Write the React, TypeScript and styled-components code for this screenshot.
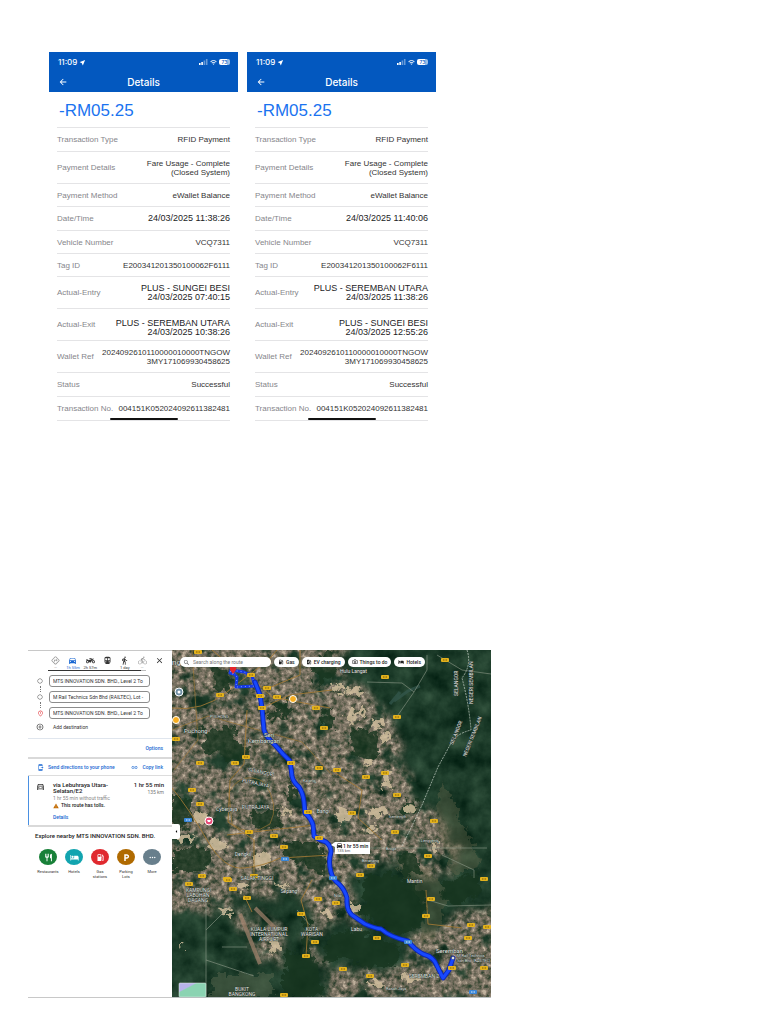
import React from "react";
import styled, { createGlobalStyle, css } from "styled-components";
import {
  MdOutlineDirections, MdDirectionsCar, MdTwoWheeler, MdDirectionsTransit, MdDirectionsWalk,
  MdDirectionsBike, MdClose, MdOutlinePlace, MdAddCircleOutline, MdSendToMobile, MdLink,
  MdOutlineDirectionsCar, MdWarning, MdRestaurant, MdHotel, MdLocalGasStation, MdLocalParking,
  MdMoreHoriz, MdSearch, MdEvStation, MdOutlineLocalSee, MdArrowBack, MdWifi, MdNearMe, MdArrowLeft,
  MdRadioButtonUnchecked,
} from "react-icons/md";

const GlobalStyle = createGlobalStyle`
  * { box-sizing: border-box; }
  body { margin: 0; background: #fff; }
  button, input { font: inherit; color: inherit; }
  button { border: 0; padding: 0; background: none; cursor: pointer; }
  a { color: inherit; text-decoration: none; }
`;

const Page = styled.main`
  padding: 52px 0 26px;
  font-family: "Liberation Sans", Arial, sans-serif;
`;

const Receipts = styled.section`
  display: grid;
  grid-template-columns: 49fr 189fr 9fr 189fr 332fr;
  margin-bottom: 230px;
`;

const Receipt = styled.article<{ $column: number }>`
  grid-column: ${(p) => p.$column};
  grid-row: 1;
  min-width: 0;
`;

const ReceiptHeader = styled.header`
  background: #0358bf;
  color: #fff;
  font-family: Inter, "Liberation Sans", sans-serif;
`;

const StatusBar = styled.div`
  display: flex;
  align-items: center;
  justify-content: space-between;
  height: 20px;
  padding: 0 8px 0 9px;
  font-size: 8px;
  font-weight: 500;
`;

const StatusGroup = styled.div`
  display: flex;
  align-items: center;
  gap: 2px;
`;

const Battery = styled.span`
  width: 11px;
  height: 6px;
  border-radius: 2px;
  background: linear-gradient(90deg, #fff 72%, #9dbfe8 72%);
  color: #0358bf;
  font-size: 5px;
  line-height: 6px;
  text-align: center;
`;

const TitleBar = styled.div`
  display: grid;
  grid-template-columns: 10px 1fr 10px;
  align-items: center;
  height: 20px;
  padding: 0 9px;
`;

const BackButton = styled.button`
  display: flex;
`;

const Title = styled.h1`
  margin: 0;
  font-size: 10px;
  font-weight: 500;
  text-align: center;
`;

const ReceiptBody = styled.div`
  padding: 0 8px;
`;

const Amount = styled.p`
  margin: 0;
  padding: 2px 2px 0;
  font-size: 17px;
  line-height: 33px;
  color: #1a73f0;
`;

const Fields = styled.dl`
  margin: 0;
  border-top: 1px solid #e4e4e6;
`;

type Size = "compact" | "regular" | "tall";
const heights: Record<Size, string> = { compact: "23px", regular: "24px", tall: "32px" };

const FieldRow = styled.div<{ $size: Size }>`
  display: flex;
  align-items: center;
  justify-content: space-between;
  min-height: ${(p) => heights[p.$size]};
  border-bottom: 1px solid #e4e4e6;
  white-space: nowrap;
`;

const FieldName = styled.dt`
  font-size: 8px;
  color: #86868b;
`;

const FieldValue = styled.dd<{ $plain?: boolean; $low?: boolean }>`
  margin: 0;
  padding-top: ${(p) => (p.$low ? "7px" : "0")};
  font-size: ${(p) => (p.$plain ? "9px" : "8px")};
  line-height: 9px;
  text-align: right;
  color: ${(p) => (p.$plain ? "#1c1c1e" : "#333")};
  white-space: pre-line;
`;

const HomeIndicator = styled.div`
  width: 68px;
  height: 2px;
  margin: -3px auto 0;
  border-radius: 1px;
  background: #111;
  position: relative;
`;

interface Field { name: string; value: string; size: Size; plain?: boolean; low?: boolean }

const fieldsFor = (time: string, entry: string, exit: string): Field[] => [
  { name: "Transaction Type", value: "RFID Payment", size: "regular" },
  { name: "Payment Details", value: "Fare Usage - Complete\n(Closed System)", size: "tall" },
  { name: "Payment Method", value: "eWallet Balance", size: "compact" },
  { name: "Date/Time", value: time, size: "regular", plain: true },
  { name: "Vehicle Number", value: "VCQ7311", size: "compact" },
  { name: "Tag ID", value: "E200341201350100062F6111", size: "compact" },
  { name: "Actual-Entry", value: entry, size: "tall", plain: true },
  { name: "Actual-Exit", value: exit, size: "tall", plain: true, low: true },
  { name: "Wallet Ref", value: "2024092610110000010000TNGOW\n3MY171069930458625", size: "tall" },
  { name: "Status", value: "Successful", size: "regular" },
  { name: "Transaction No.", value: "004151K052024092611382481", size: "regular" },
];

const receipts = [
  { column: 2, fields: fieldsFor("24/03/2025 11:38:26", "PLUS - SUNGEI BESI\n24/03/2025 07:40:15", "PLUS - SEREMBAN UTARA\n24/03/2025 10:38:26") },
  { column: 4, fields: fieldsFor("24/03/2025 11:40:06", "PLUS - SEREMBAN UTARA\n24/03/2025 11:38:26", "PLUS - SUNGEI BESI\n24/03/2025 12:55:26") },
];

const Signal = () => (
  <svg width="9" height="6" viewBox="0 0 9 6" fill="#fff" aria-hidden>
    <rect x="0" y="4" width="1.6" height="2" /><rect x="2.3" y="3" width="1.6" height="3" />
    <rect x="4.6" y="1.5" width="1.6" height="4.5" opacity=".4" /><rect x="6.9" y="0" width="1.6" height="6" opacity=".4" />
  </svg>
);

/* ---------- directions ---------- */

const Directions = styled.section`
  display: grid;
  grid-template-columns: 28fr 144fr 319fr 277fr;
  font-family: Roboto, "Liberation Sans", sans-serif;
`;

const Panel = styled.aside`
  grid-column: 2;
  min-width: 0;
  border-top: 1px solid #c8c8c8;
  border-bottom: 1px solid #c8c8c8;
  font-size: 5px;
  color: #333;
`;

const Modes = styled.nav`
  display: flex;
  align-items: flex-start;
  margin: 5px 4px 0 19px;
  height: 14px;
`;

const Mode = styled.button<{ $tone: string }>`
  display: flex;
  flex: 1;
  flex-direction: column;
  align-items: center;
  font-size: 4px;
  line-height: 5px;
  color: ${(p) => p.$tone};
  white-space: nowrap;
`;

const ScrollTrack = styled.div`
  height: 1px;
  margin: 0 26px 0 20px;
  background: linear-gradient(90deg, #333 95%, #bbb 95%);
`;

const Stops = styled.ul`
  display: flex;
  flex-direction: column;
  gap: 4px;
  margin: 4px 0 0;
  padding: 0 22px 0 8px;
  list-style: none;
`;

const Stop = styled.li`
  display: grid;
  grid-template-columns: 8px 1fr;
  align-items: center;
  column-gap: 5px;
  font-size: 5px;
`;

const StopMark = styled.span<{ $final?: boolean }>`
  display: flex;
  justify-content: center;
  color: ${(p) => (p.$final ? "#e5484d" : "#555")};
  position: relative;
  ${(p) => !p.$final && css`
    &::after {
      content: "";
      position: absolute;
      top: 8px;
      height: 6px;
      border-left: 1px dotted #777;
    }
  `}
`;

const StopInput = styled.input`
  width: 100%;
  min-width: 0;
  height: 12px;
  padding: 0 3px;
  border: 1px solid #8c8c8c;
  border-radius: 3px;
  background: #fff;
`;

const AddStop = styled.button`
  display: grid;
  grid-template-columns: 8px auto;
  align-items: center;
  column-gap: 9px;
  height: 16px;
  margin-left: 8px;
`;

const OptionsRow = styled.div`
  display: flex;
  align-items: center;
  justify-content: flex-end;
  height: 19px;
  margin-top: 3px;
  padding-right: 9px;
  border-top: 1px solid #e0e6ee;
`;

const Divider = styled.hr`
  height: 2px;
  margin: 0;
  border: 0;
  background: #d9d9d9;
`;

const BlueLink = styled.a`
  display: inline-flex;
  align-items: center;
  gap: 4px;
  font-weight: 500;
  color: #1967d2;
`;

const ShareRow = styled.div`
  display: flex;
  align-items: center;
  justify-content: space-between;
  height: 17px;
  padding: 0 9px;
  border-bottom: 1px solid #ddd;
`;

const Trip = styled.article`
  display: grid;
  grid-template-columns: 8px 1fr auto;
  column-gap: 9px;
  padding: 6px 8px 4px 7px;
  border-left: 1px solid #4a90e2;
  line-height: 7px;
`;

const TripMain = styled.div`
  min-width: 0;
  white-space: nowrap;
`;

const TripTitle = styled.h2`
  margin: 0 0 1px;
  font-size: 6px;
  line-height: 6px;
  font-weight: 500;
  color: #222;
`;

const TripNote = styled.p<{ $muted?: boolean }>`
  display: flex;
  align-items: center;
  gap: 2px;
  margin: 0;
  font-weight: ${(p) => (p.$muted ? 400 : 500)};
  color: ${(p) => (p.$muted ? "#888" : "#222")};
`;

const TripLinkLine = styled.div`
  padding-top: 5px;
`;

const TripTime = styled.div`
  text-align: right;
  color: #777;
`;

const Explore = styled.section`
  padding: 5px 7px;
`;

const ExploreTitle = styled.h2`
  margin: 0 0 10px;
  font-size: 6px;
  line-height: 7px;
  font-weight: 500;
  white-space: nowrap;
  color: #222;
`;

const Places = styled.div`
  display: grid;
  grid-template-columns: repeat(5, 1fr);
`;

const Place = styled.button`
  display: flex;
  flex-direction: column;
  align-items: center;
  gap: 4px;
  min-width: 0;
  font-size: 4px;
  line-height: 5px;
  text-align: center;
  white-space: pre-line;
`;

const PlaceIcon = styled.span<{ $color: string }>`
  display: flex;
  align-items: center;
  justify-content: center;
  width: 18px;
  height: 16px;
  border-radius: 50%;
  background: ${(p) => p.$color};
  color: #fff;
`;

const MapArea = styled.div`
  grid-column: 3;
  min-width: 0;
  position: relative;
  overflow: hidden;
`;

const MapTools = styled.div`
  display: flex;
  gap: 3px;
  position: absolute;
  top: 7px;
  left: 8px;
`;

const SearchBox = styled.label`
  display: flex;
  align-items: center;
  gap: 3px;
  width: 91px;
  height: 10px;
  padding: 0 3px;
  border-radius: 5px;
  background: #fff;
  font-size: 5px;
  color: #555;
`;

const SearchInput = styled.input`
  flex: 1;
  min-width: 0;
  padding: 0;
  border: 0;
  background: none;
  outline: 0;
  &::placeholder { color: #777; opacity: 1; }
`;

const Chip = styled.button`
  display: flex;
  align-items: center;
  gap: 2px;
  height: 10px;
  padding: 0 4px;
  border-radius: 5px;
  background: #fff;
  color: #222;
  font-size: 5px;
  font-weight: 500;
  white-space: nowrap;
`;

const CollapseTab = styled.button`
  display: flex;
  align-items: center;
  justify-content: center;
  position: absolute;
  left: 0;
  top: 50%;
  width: 8px;
  height: 15px;
  border-radius: 0 2px 2px 0;
  background: #fff;
`;

const MapSvg = styled.svg`
  display: block;
  width: 100%;
  height: auto;
`;

const route = "M83 32 L88 45 L90 58 L92 80 Q94 87 103 95 L111 104 L118 111 L120 126 Q121 132 127 137 Q131 143 132 152 L133 163 Q139 168 141 175 L142 186 Q147 190 154 192 Q159 196 159 202 Q156 212 159 222 Q161 230 167 234 Q173 240 175 248 Q174 260 180 265 L193 274 Q202 278 209 279 Q218 287 236 291 Q243 300 251 304 Q262 307 265 316 L271 328 L277 320 L281 308";
const loop = "M61 24 L58 23 L59 20 L72 22 L80 26 L83 36 L64 37 L65 27 L61 23";

const shields: [number, number][] = [
  [26, 2], [79, 25], [48, 45], [95, 12], [95, 38], [105, 47], [88, 46], [90, 58], [144, 58], [152, 78], [4, 89], [28, 113], [63, 113], [74, 107],
  [119, 113], [147, 118], [20, 140], [28, 154], [136, 162], [77, 182], [102, 186], [112, 197], [147, 188], [30, 226], [55, 229], [82, 226],
  [17, 234], [56, 230], [61, 239], [75, 248], [146, 249], [129, 264], [143, 292], [134, 306], [112, 345], [213, 27], [273, 10], [225, 67],
  [165, 120], [194, 127], [213, 123], [225, 145], [180, 163], [223, 182], [262, 171], [256, 206], [199, 216], [188, 225], [312, 229],
  [164, 253], [254, 266], [259, 249], [299, 275], [296, 288], [205, 288], [171, 319], [198, 326], [233, 315], [280, 318], [312, 318], [315, 277],
];
const blueShields: [number, number][] = [[16, 170], [113, 209], [161, 228], [236, 292], [301, 342]];
const clearings: [number, number, number, number][] = [
  [183, 42, 9, 4], [179, 66, 5, 7], [188, 62, 7, 3], [205, 74, 6, 5], [214, 87, 6, 4], [168, 38, 6, 4], [238, 158, 5, 6], [206, 162, 12, 4],
  [172, 165, 9, 6], [45, 195, 9, 6], [89, 210, 9, 7], [14, 188, 12, 3], [30, 168, 8, 6], [183, 258, 6, 5], [102, 296, 5, 8], [11, 296, 2, 2],
  [72, 236, 5, 5], [55, 262, 7, 2], [156, 262, 7, 3], [110, 235, 6, 2], [240, 327, 9, 3], [205, 334, 8, 3], [197, 113, 6, 2], [214, 130, 4, 8],
  [263, 195, 3, 4], [200, 180, 8, 3], [115, 161, 5, 3],
];
const forests = [
  "M31 80 L64 78 L66 104 L33 103Z", "M39 18 L56 20 L58 44 L44 36Z", "M136 12 L160 2 L166 22 L148 36Z", "M102 52 L118 50 L116 68 L106 66Z",
  "M0 144 L18 150 L20 172 L8 184 L0 184Z", "M0 200 L28 196 L42 210 L30 222 L0 222Z", "M52 100 L76 98 L74 110 L55 112Z",
  "M148 64 L160 60 L160 80 L148 78Z", "M108 192 L150 192 L153 224 L134 216 L112 204Z", "M75 165 L105 158 L110 176 L88 182Z",
  "M188 230 L215 222 L245 234 L256 248 L248 276 L230 286 L205 276 L186 262 L192 250Z", "M268 234 L306 222 L309 244 L284 256 L270 250Z",
  "M168 280 L192 284 L228 296 L222 316 L196 318 L170 308 L152 314 L153 292Z", "M112 300 L142 305 L152 347 L112 347Z",
  "M132 268 L140 268 L138 300 L130 304Z", "M178 78 L202 82 L208 104 L196 112 L180 104Z", "M232 150 L245 150 L244 164 L230 164Z",
  "M225 204 L246 204 L248 224 L232 228Z", "M94 62 L112 58 L112 64 L98 72Z", "M118 130 L126 142 L122 150 L114 146Z",
];

const labels: { x: number; y: number; s?: number; t: string; r?: number }[] = [
  { x: 12, y: 83, s: 6, t: "Puchong" }, { x: 92, y: 87, s: 6, t: "Seri" }, { x: 76, y: 93, s: 6, t: "Kembangan" },
  { x: 38, y: 68, s: 4, t: "PUCHONG" }, { x: 76, y: 121, s: 5, t: "SELANGOR", r: 12 }, { x: 70, y: 132, s: 5, t: "PUTRAJAYA", r: 12 },
  { x: 70, y: 159, s: 5, t: "PUTRAJAYA" }, { x: 44, y: 161, s: 5, t: "Cyberjaya" }, { x: 145, y: 163, s: 5, t: "Bangi" }, { x: 131, y: 132, s: 4, t: "Kajang" },
  { x: 63, y: 206, s: 5, t: "Dengkil" }, { x: 168, y: 23, s: 5, t: "Hulu Langat" }, { x: 217, y: 168, s: 4, t: "Semenyih" }, { x: 214, y: 200, s: 4, t: "Broga" },
  { x: 249, y: 192, s: 4, t: "Lenggeng" }, { x: 190, y: 212, s: 4, t: "Beranang" }, { x: 235, y: 233, s: 5, t: "Mantin" }, { x: 179, y: 281, s: 5, t: "Labu" },
  { x: 162, y: 247, s: 4, t: "Nilai" }, { x: 264, y: 303, s: 6, t: "Seremban" }, { x: 237, y: 328, s: 5, t: "SEREMBAN 2" }, { x: 214, y: 340, s: 4, t: "Rasah Jaya" },
];

const centred = [
  { x: 26, y: 243, lines: ["KAMPUNG", "LABOHAN", "DAGANG"] }, { x: 97, y: 282, lines: ["KUALA LUMPUR", "INTERNATIONAL", "AIRPORT"] },
  { x: 140, y: 282, lines: ["KOTA", "WARISAN"] }, { x: 70, y: 342, lines: ["BUKIT", "BANGKONG"] }, { x: 85, y: 231, lines: ["SALAK TINGGI"] }, { x: 117, y: 244, lines: ["Sepang"] },
];

const SatelliteMap = () => (
  <MapSvg viewBox="0 0 319 348" role="img" aria-label="Satellite map with driving route">
    <defs>
      <filter id="forest" x="0" y="0" width="100%" height="100%" colorInterpolationFilters="sRGB">
        <feTurbulence type="fractalNoise" baseFrequency=".05" numOctaves="5" seed="4" />
        <feColorMatrix values=".26 0 0 0 -.02  .28 0 0 0 .09  .24 0 0 0 .04  0 0 0 0 1" />
        <feComposite in2="SourceAlpha" operator="in" />
      </filter>
      <filter id="urban" x="-5%" y="-5%" width="110%" height="110%" colorInterpolationFilters="sRGB">
        <feTurbulence type="fractalNoise" baseFrequency=".05" numOctaves="4" seed="7" result="warp" />
        <feDisplacementMap in="SourceGraphic" in2="warp" scale="34" xChannelSelector="R" yChannelSelector="G" result="moved" />
        <feGaussianBlur in="moved" stdDeviation="3" result="shape" />
        <feColorMatrix in="warp" values="0 0 0 0 0  0 0 0 0 0  0 0 0 0 0  0 0 5 0 -1.3" result="cover" />
        <feTurbulence type="fractalNoise" baseFrequency=".2" numOctaves="4" seed="12" />
        <feColorMatrix values="1.6 0 0 0 -.26  1.6 0 0 0 -.26  1.6 0 0 0 -.26  0 0 0 0 1" />
        <feComponentTransfer>
          <feFuncR type="table" tableValues=".16 .24 .34 .44 .52 .62 .76" />
          <feFuncG type="table" tableValues=".24 .29 .36 .42 .48 .57 .70" />
          <feFuncB type="table" tableValues=".18 .22 .28 .36 .42 .50 .62" />
        </feComponentTransfer>
        <feComposite in2="shape" operator="in" />
        <feComposite in2="cover" operator="in" />
      </filter>
      <filter id="ragged" x="-30%" y="-30%" width="160%" height="160%" colorInterpolationFilters="sRGB">
        <feTurbulence type="fractalNoise" baseFrequency=".14" numOctaves="3" seed="3" />
        <feDisplacementMap in="SourceGraphic" scale="16" xChannelSelector="R" yChannelSelector="G" />
        <feGaussianBlur stdDeviation=".6" />
      </filter>
      <linearGradient id="inset" x2="1" y2="1"><stop offset=".3" stopColor="#b8b4ea" /><stop offset=".35" stopColor="#8bd3b2" /></linearGradient>
    </defs>
    <rect width="319" height="348" fill="#153b29" filter="url(#forest)" />
    <path filter="url(#urban)" d="M-20 -20 L180 -20 L172 20 L205 52 L232 95 L238 140 L268 165 L285 205 L275 226 L212 215 L180 220 L180 245 L186 275 L150 276 L120 244 L62 256 L-20 270Z M66 262 L82 262 L118 290 L112 312 L90 316Z M280 262 L340 250 L340 360 L150 360 L155 325 L230 315 L232 285 L262 285Z M140 262 L150 310 L128 300Z" />
    <path d="M225 215 L258 218 L276 250 L262 290 L245 292 L255 262Z M270 130 L285 160 L308 215 L280 224 L262 170Z" fill="#6b6a4e" opacity=".35" filter="url(#ragged)" />
    <path d="M40 325 H100 V348 H40Z" fill="#55644c" opacity=".5" filter="url(#ragged)" />
    <g fill="#17351f" opacity=".8" filter="url(#ragged)">{forests.map((d) => <path key={d} d={d} />)}</g>
    <g fill="#cfbd9c" opacity=".85" filter="url(#ragged)">
      {clearings.map(([x, y, rx, ry]) => <ellipse key={`${x}-${y}`} cx={x} cy={y} rx={rx} ry={ry} />)}
    </g>
    <path d="M68 264 L88 314 M83 258 L104 279" stroke="#a4846e" strokeWidth="4" opacity=".7" />
    <path d="M222 51 l14 -10 12 -5 M218 54 l10 -12" stroke="#35594f" strokeWidth="3" fill="none" opacity=".7" />
    <g fill="none" stroke="#a57a35" strokeWidth="1" opacity=".85">
      <path d="M0 58 Q30 62 55 42 T95 12 L105 0 M0 138 Q18 160 35 190 T72 218 T108 208 L159 205 M75 60 L72 114 L58 130 L56 172 L82 190 L82 225 M90 58 L118 45 L160 40 M40 0 Q60 18 80 28 L100 47 L158 58 M55 185 L143 175 M159 120 L190 140 L186 168 L210 190 M72 245 L80 262 M128 0 L128 25 L92 40 M254 240 L256 274 L290 278 M134 306 L136 275 L129 250 L140 230" />
      <path d="M57 142 Q70 120 92 132 Q108 155 98 174 Q78 188 60 174Z M0 80 L36 66 L72 76 L130 92 L160 125 M20 0 L26 90 L2 120" opacity=".7" />
    </g>
    <g fill="none" stroke="#8e9a89" strokeWidth="1" opacity=".6">
      <path d="M195 32 L230 33 L242 42 L255 20 L255 5 M265 5 L290 20 L319 24 M242 42 L226 65 M34 250 V347 M34 280 L58 256 M50 297 H75 M34 310 L82 326 M159 198 H315 M270 205 L302 220 V228 M125 260 L138 275 M256 250 L276 256 L319 255" />
    </g>
    <path d="M295 0 Q300 15 290 28 Q297 54 299 80 Q283 84 278 95 L266 117 L250 155 L240 176 L230 196" fill="none" stroke="#c7d2c8" strokeWidth="1" strokeDasharray="2 1" opacity=".7" />
    <path d={loop} fill="none" stroke="#1438e6" strokeWidth="3" strokeLinejoin="round" />
    <path d={loop} fill="none" stroke="#7ea5ff" strokeWidth="1" strokeDasharray="1 3" />
    <path d={route} fill="none" stroke="#0c27b5" strokeWidth="5" strokeLinejoin="round" strokeLinecap="round" />
    <path d={route} fill="none" stroke="#1748ff" strokeWidth="3" strokeLinejoin="round" strokeLinecap="round" />
    <g>
      {shields.map(([x, y], i) => (
        <g key={i}><rect x={x - 4} y={y - 2} width="8" height="4" rx="1" fill="#e3b21d" /><path d={`M${x - 2} ${y} h4`} stroke="#7c5d0b" strokeWidth="1" strokeDasharray="1 .5" /></g>
      ))}
      {blueShields.map(([x, y], i) => (
        <g key={i}><rect x={x - 4} y={y - 2} width="8" height="4" rx="1" fill="#3a86d8" /><path d={`M${x - 2} ${y} h4`} stroke="#dcecff" strokeWidth="1" strokeDasharray="1 .5" /></g>
      ))}
    </g>
    <g fill="#e6e8e2" stroke="#26332b" strokeWidth=".7" paintOrder="stroke" fontFamily="Roboto, sans-serif">
      {labels.map((l, i) => <text key={i} x={l.x} y={l.y} fontSize={l.s} transform={l.r ? `rotate(${l.r} ${l.x} ${l.y})` : undefined}>{l.t}</text>)}
      {centred.map((c) => c.lines.map((t, i) => <text key={t} x={c.x} y={c.y + i * 5 - 1} fontSize="5" textAnchor="middle">{t}</text>))}
      <g fontSize="5">
        <text transform="translate(286 46) rotate(-90)">SELANGOR</text>
        <text transform="translate(301 54) rotate(-90)">NEGERI SEMBILAN</text>
        <text transform="translate(281 95) rotate(-68)">SELANGOR</text>
        <text transform="translate(294 107) rotate(-68)">NEGERI SEMBILAN</text>
      </g>
      <text x="0" y="15" fontSize="8">ng</text>
      <text x="285" y="307" fontSize="4">M Rail Technics</text>
      <text x="285" y="312" fontSize="4">Sdn Bhd (RAILTEC)</text>
    </g>
    <g stroke="#fff" strokeWidth="1">
      <circle cx="7" cy="42" r="4" fill="#6f8fa3" /><circle cx="4" cy="70" r="3.5" fill="#f7ae22" />
      <circle cx="121" cy="49" r="3.5" fill="#f7ae22" /><circle cx="37" cy="171" r="4" fill="#e84c78" />
    </g>
    <circle cx="7" cy="42" r="1.5" fill="#fff" />
    <path d="M35 170 h4 l-1 2 h-2Z" fill="#fff" />
    <path d="M61 24 L58 20 Q57 16 61 16 Q65 16 64 20Z" fill="#e5262c" />
    <circle cx="281" cy="308" r="1.5" fill="#fff" stroke="#333" strokeWidth=".5" />
    <path d="M159 195 l4 -3 h35 v12 h-35 v-7Z" fill="#fff" />
    <MdDirectionsCar x="164" y="192" size={7} color="#111" />
    <g fontFamily="Roboto, sans-serif"><text x="171" y="198" fontSize="5" fontWeight="500" fill="#111">1 hr 55 min</text><text x="165" y="202" fontSize="4" fill="#555">135 km</text></g>
    <rect x="7" y="333" width="27" height="14" rx="1" fill="url(#inset)" stroke="#e8eee8" strokeWidth=".5" />
    <path d="M0 347.500 H319" stroke="#b9bfc0" />
  </MapSvg>
);

const modes = [
  { name: "Best", Icon: MdOutlineDirections, time: "—", tone: "#999" },
  { name: "Driving", Icon: MdDirectionsCar, time: "1h 55m", tone: "#1967d2" },
  { name: "Motorcycle", Icon: MdTwoWheeler, time: "2h 57m", tone: "#333" },
  { name: "Transit", Icon: MdDirectionsTransit, time: "", tone: "#333" },
  { name: "Walking", Icon: MdDirectionsWalk, time: "1 day", tone: "#333" },
  { name: "Cycling", Icon: MdDirectionsBike, time: "—", tone: "#999" },
];

const stops = [
  "MTS INNOVATION SDN. BHD., Level 2 To",
  "M Rail Technics Sdn Bhd (RAILTEC), Lot -",
  "MTS INNOVATION SDN. BHD., Level 2 To",
];

const places = [
  { name: "Restaurants", Icon: MdRestaurant, color: "#188038" },
  { name: "Hotels", Icon: MdHotel, color: "#12a4af" },
  { name: "Gas\nstations", Icon: MdLocalGasStation, color: "#e0292f" },
  { name: "Parking\nLots", Icon: MdLocalParking, color: "#b06a00" },
  { name: "More", Icon: MdMoreHoriz, color: "#687f8c" },
];

const chips = [
  { name: "Gas", Icon: MdLocalGasStation },
  { name: "EV charging", Icon: MdEvStation },
  { name: "Things to do", Icon: MdOutlineLocalSee },
  { name: "Hotels", Icon: MdHotel },
];

export default function App() {
  return (
    <Page>
      <GlobalStyle />
      <Receipts>
        {receipts.map((r) => (
          <Receipt key={r.column} $column={r.column}>
            <ReceiptHeader>
              <StatusBar>
                <StatusGroup>11:09<MdNearMe size={7} /></StatusGroup>
                <StatusGroup><Signal /><MdWifi size={7} /><Battery>73</Battery></StatusGroup>
              </StatusBar>
              <TitleBar>
                <BackButton aria-label="Back"><MdArrowBack size={10} /></BackButton>
                <Title>Details</Title>
              </TitleBar>
            </ReceiptHeader>
            <ReceiptBody>
              <Amount>-RM05.25</Amount>
              <Fields>
                {r.fields.map((f) => (
                  <FieldRow key={f.name} $size={f.size}>
                    <FieldName>{f.name}</FieldName>
                    <FieldValue $plain={f.plain} $low={f.low}>{f.value}</FieldValue>
                  </FieldRow>
                ))}
              </Fields>
            </ReceiptBody>
            <HomeIndicator />
          </Receipt>
        ))}
      </Receipts>

      <Directions>
        <Panel>
          <Modes aria-label="Travel modes">
            {modes.map(({ name, Icon, time, tone }) => (
              <Mode key={name} aria-label={name} $tone={tone}><Icon size={9} />{time}</Mode>
            ))}
            <Mode aria-label="Close" $tone="#333"><MdClose size={9} /></Mode>
          </Modes>
          <ScrollTrack />
          <Stops>
            {stops.map((s, i) => (
              <Stop key={i}>
                <StopMark $final={i === 2}>{i === 2 ? <MdOutlinePlace size={7} /> : <MdRadioButtonUnchecked size={6} />}</StopMark>
                <StopInput aria-label={`Stop ${i + 1}`} defaultValue={s} />
              </Stop>
            ))}
          </Stops>
          <AddStop><MdAddCircleOutline size={8} />Add destination</AddStop>
          <OptionsRow><BlueLink href="#options">Options</BlueLink></OptionsRow>
          <Divider />
          <ShareRow>
            <BlueLink href="#send"><MdSendToMobile size={7} />Send directions to your phone</BlueLink>
            <BlueLink href="#copy"><MdLink size={7} />Copy link</BlueLink>
          </ShareRow>
          <Trip>
            <MdOutlineDirectionsCar size={9} />
            <TripMain>
              <TripTitle>via Lebuhraya Utara-<br />Selatan/E2</TripTitle>
              <TripNote $muted>1 hr 55 min without traffic</TripNote>
              <TripNote><MdWarning size={6} color="#c26a00" />This route has tolls.</TripNote>
              <TripLinkLine><BlueLink href="#details">Details</BlueLink></TripLinkLine>
            </TripMain>
            <TripTime>
              <TripTitle>1 hr 55 min</TripTitle>
              135 km
            </TripTime>
          </Trip>
          <Divider />
          <Explore>
            <ExploreTitle>Explore nearby MTS INNOVATION SDN. BHD.</ExploreTitle>
            <Places>
              {places.map(({ name, Icon, color }) => (
                <Place key={name}><PlaceIcon $color={color}><Icon size={9} /></PlaceIcon>{name}</Place>
              ))}
            </Places>
          </Explore>
        </Panel>
        <MapArea>
          <SatelliteMap />
          <MapTools>
            <SearchBox><MdSearch size={7} /><SearchInput aria-label="Search along the route" placeholder="Search along the route" /></SearchBox>
            {chips.map(({ name, Icon }) => <Chip key={name}><Icon size={6} />{name}</Chip>)}
          </MapTools>
          <CollapseTab aria-label="Collapse side panel"><MdArrowLeft size={7} /></CollapseTab>
        </MapArea>
      </Directions>
    </Page>
  );
}
